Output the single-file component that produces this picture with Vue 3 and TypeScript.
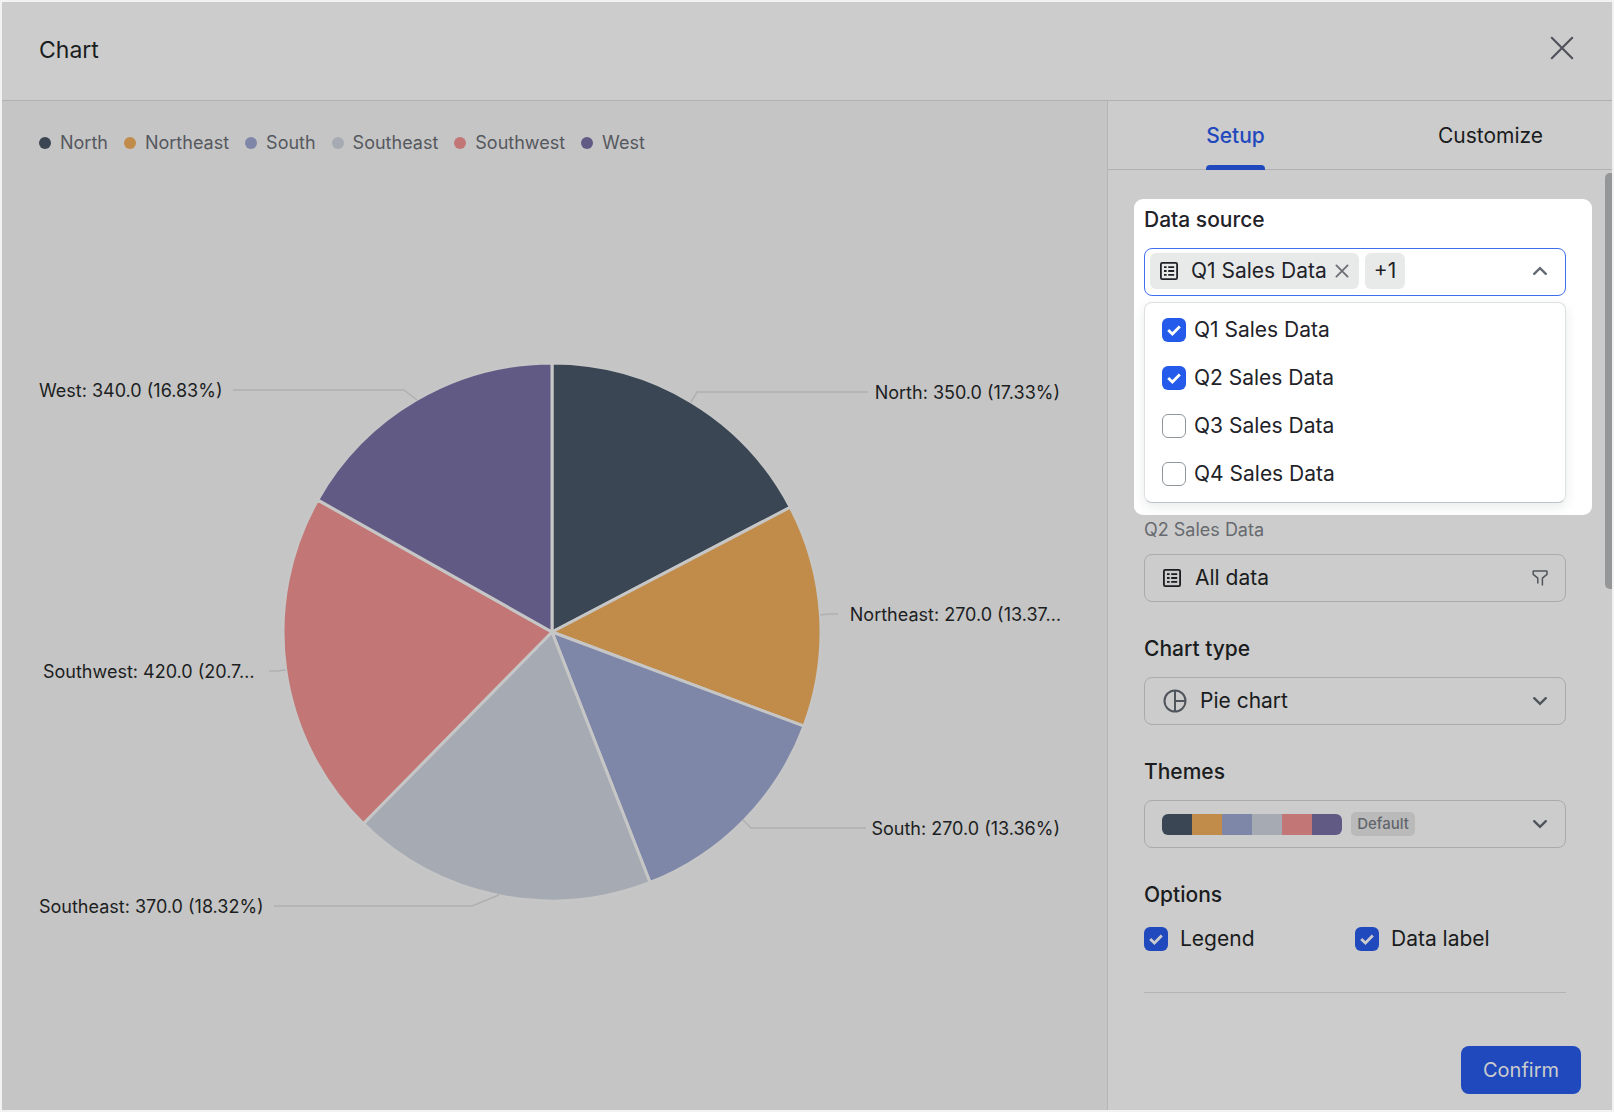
<script setup lang="ts">
import { computed, reactive, ref } from 'vue'

interface Region {
  name: string
  value: number
  color: string
  label: string
  x: number
  y: number
  anchor: 'start' | 'end'
  leader: string
}

const regions: Region[] = [
  { name: 'North', value: 350, color: '#3b4654', label: 'North: 350.0 (17.33%)', x: 1058, y: 212, anchor: 'end', leader: '689,222 695,212 866,212' },
  { name: 'Northeast', value: 270, color: '#c18b49', label: 'Northeast: 270.0 (13.37…', x: 1059, y: 434, anchor: 'end', leader: '818,435 826,434 836,434' },
  { name: 'South', value: 270, color: '#7f87a8', label: 'South: 270.0 (13.36%)', x: 1058, y: 648, anchor: 'end', leader: '741,640 749,648 864,648' },
  { name: 'Southeast', value: 370, color: '#a6abb3', label: 'Southeast: 370.0 (18.32%)', x: 37, y: 726, anchor: 'start', leader: '497,715 470,726 272,726' },
  { name: 'Southwest', value: 420, color: '#c27776', label: 'Southwest: 420.0 (20.7…', x: 41, y: 491, anchor: 'start', leader: '284,490 275,491 267,491' },
  { name: 'West', value: 340, color: '#615a85', label: 'West: 340.0 (16.83%)', x: 37, y: 210, anchor: 'start', leader: '415,220 402,210 231,210' },
]

const center = { x: 550, y: 452 }
const radius = 269

const slices = computed(() => {
  const total = regions.reduce((sum, r) => sum + r.value, 0)
  let angle = -Math.PI / 2
  return regions.map((r) => {
    const end = angle + (r.value / total) * Math.PI * 2
    const point = (a: number) =>
      `${(center.x + radius * Math.cos(a)).toFixed(2)} ${(center.y + radius * Math.sin(a)).toFixed(2)}`
    const d = `M${center.x} ${center.y} L${point(angle)} A${radius} ${radius} 0 0 1 ${point(end)} Z`
    angle = end
    return { color: r.color, d }
  })
})

const sources = reactive([
  { name: 'Q1 Sales Data', checked: true },
  { name: 'Q2 Sales Data', checked: true },
  { name: 'Q3 Sales Data', checked: false },
  { name: 'Q4 Sales Data', checked: false },
])

const options = reactive([
  { name: 'Legend', checked: true },
  { name: 'Data label', checked: true },
])

const chartType = ref('Pie chart')
const theme = ref('Default')
</script>

<template>
  <div class="frame">
    <div class="dialog">
      <header class="header">
        <h1 class="title">Chart</h1>
        <button class="icon-button" type="button" aria-label="Close">
          <svg width="24" height="24" viewBox="0 0 24 24" fill="none" stroke="#50535a" stroke-width="2.2" stroke-linecap="round">
            <path d="M1.8 1.8 22.2 22.2M22.2 1.8 1.8 22.2" />
          </svg>
        </button>
      </header>

      <div class="body">
        <main class="canvas">
          <ul class="legend">
            <li v-for="r in regions" :key="r.name" class="legend-item">
              <span class="dot" :style="{ background: r.color }"></span>{{ r.name }}
            </li>
          </ul>
          <svg class="pie" viewBox="0 0 1105 930" role="img" aria-label="Sales by region">
            <path v-for="s in slices" :key="s.color" class="slice" :d="s.d" :fill="s.color" />
            <polyline v-for="r in regions" :key="r.name" class="leader" :points="r.leader" />
            <text
              v-for="r in regions"
              :key="r.label"
              class="pie-label"
              :x="r.x"
              :y="r.y"
              :text-anchor="r.anchor"
              dominant-baseline="central"
            >{{ r.label }}</text>
          </svg>
        </main>

        <aside class="side">
          <nav class="tabs" role="tablist">
            <button class="tab active" type="button" role="tab" aria-selected="true"><span class="tab-text">Setup</span></button>
            <button class="tab" type="button" role="tab" aria-selected="false"><span class="tab-text">Customize</span></button>
          </nav>
          <div class="scrollbar"></div>

          <div class="settings">
            <section class="spotlight">
              <h2 id="source-heading" class="heading">Data source</h2>
              <div class="field focused" role="group" aria-labelledby="source-heading">
                <span class="tag">
                  <svg class="sheet" width="18" height="18" viewBox="0 0 18 18" fill="none" stroke="#1f2329" stroke-width="1.8">
                    <rect x=".9" y=".9" width="16.2" height="16.2" rx="1.4" />
                    <path d="M4 5.2h2.6M8.2 5.2h6M4 9h2.6M8.2 9h6M4 12.8h2.6M8.2 12.8h6" />
                  </svg>
                  Q1 Sales Data
                  <button class="icon-button" type="button" aria-label="Remove Q1 Sales Data">
                    <svg width="14" height="14" viewBox="0 0 14 14" fill="none" stroke="#6b6e73" stroke-width="1.8" stroke-linecap="round">
                      <path d="M1.4 1.4 12.6 12.6M12.6 1.4 1.4 12.6" />
                    </svg>
                  </button>
                </span>
                <span class="tag more">+1</span>
                <button class="icon-button push" type="button" aria-label="Close list">
                  <svg width="16" height="10" viewBox="0 0 16 10" fill="none" stroke="#646a73" stroke-width="2.4" stroke-linecap="round">
                    <path d="M2.2 7.8 8 2.2 13.8 7.8" />
                  </svg>
                </button>
              </div>
              <div class="menu">
                <label v-for="s in sources" :key="s.name" class="menu-row">
                  <span class="check">
                    <input v-model="s.checked" type="checkbox" />
                    <svg v-if="s.checked" width="24" height="24" viewBox="0 0 24 24" fill="none" stroke="#fff" stroke-width="2.8">
                      <path d="M6.2 11.9 10.4 16 17.8 8.4" />
                    </svg>
                  </span>
                  {{ s.name }}
                </label>
              </div>
            </section>

            <p class="sub-label">Q2 Sales Data</p>
            <button class="field range" type="button">
              <svg class="sheet" width="18" height="18" viewBox="0 0 18 18" fill="none" stroke="#1a1c20" stroke-width="1.8">
                <rect x=".9" y=".9" width="16.2" height="16.2" rx="1.4" />
                <path d="M4 5.2h2.6M8.2 5.2h6M4 9h2.6M8.2 9h6M4 12.8h2.6M8.2 12.8h6" />
              </svg>
              All data
              <svg class="push" width="16" height="16" viewBox="0 0 16 16" fill="none" stroke="#50555c" stroke-width="1.5" stroke-linejoin="round">
                <path d="M5.8 13.6V8.2L1.2 4.4V1.6Q1.2 1 1.8 1H14.4Q15 1 15 1.6V4.4L10.4 8.2V15.4" />
              </svg>
            </button>

            <label class="heading" for="chart-type">Chart type</label>
            <div class="field chart-type">
              <svg width="24" height="24" viewBox="0 0 24 24" fill="none" stroke="#50555c" stroke-width="2">
                <circle cx="12" cy="12" r="10.5" />
                <path d="M12 1.5V22.5M12 12H22.5" />
              </svg>
              <select id="chart-type" v-model="chartType" class="select">
                <option>Pie chart</option>
              </select>
              <svg class="chevron" width="16" height="10" viewBox="0 0 16 10" fill="none" stroke="#50555c" stroke-width="2.4" stroke-linecap="round">
                <path d="M2.2 2.2 8 7.8 13.8 2.2" />
              </svg>
            </div>

            <label class="heading" for="theme">Themes</label>
            <div class="field theme">
              <span class="palette">
                <span v-for="r in regions" :key="r.name" class="swatch" :style="{ background: r.color }"></span>
              </span>
              <select id="theme" v-model="theme" class="theme-select">
                <option>Default</option>
              </select>
              <svg class="chevron push" width="16" height="10" viewBox="0 0 16 10" fill="none" stroke="#50555c" stroke-width="2.4" stroke-linecap="round">
                <path d="M2.2 2.2 8 7.8 13.8 2.2" />
              </svg>
            </div>

            <h2 class="heading">Options</h2>
            <div class="options">
              <label v-for="o in options" :key="o.name" class="option">
                <span class="check dim">
                  <input v-model="o.checked" type="checkbox" />
                  <svg v-if="o.checked" width="24" height="24" viewBox="0 0 24 24" fill="none" stroke="#ccc" stroke-width="2.8">
                    <path d="M6.2 11.9 10.4 16 17.8 8.4" />
                  </svg>
                </span>
                {{ o.name }}
              </label>
            </div>
          </div>

          <footer class="footer">
            <button class="confirm" type="button">Confirm</button>
          </footer>
        </aside>
      </div>
    </div>
  </div>
</template>

<style>
body {
  margin: 0;
  background: #f2f2f2;
}
</style>

<style scoped>
.frame,
.frame * {
  box-sizing: border-box;
}

.frame {
  display: flex;
  min-height: 100vh;
  padding: 2px;
  font-family: Inter, Roboto, 'Liberation Sans', sans-serif;
  font-size: 21px;
  line-height: 28px;
  color: #1a1c20;
}

button,
select {
  margin: 0;
  padding: 0;
  border: 0;
  background: none;
  color: inherit;
  font: inherit;
  text-align: left;
}

select {
  appearance: none;
}

input {
  margin: 0;
}

svg {
  display: block;
  flex: none;
}

.dialog {
  display: flex;
  flex: 1;
  flex-direction: column;
  min-width: 0;
  background: #ccc;
}

.header {
  display: flex;
  align-items: center;
  justify-content: space-between;
  height: 99px;
  padding: 0 38px 6px 37px;
  border-bottom: 1px solid #b0b1b5;
}

.title {
  margin: 0;
  padding-top: 4px;
  font-size: 23px;
  font-weight: 400;
}

.icon-button {
  display: block;
}

.body {
  display: flex;
  flex: 1;
}

.canvas {
  flex: 1;
  min-width: 0;
  background: #c5c5c5;
}

.legend {
  display: flex;
  flex-wrap: wrap;
  gap: 16px;
  margin: 0;
  padding: 30px 37px 25px;
  list-style: none;
  color: #55585e;
  font-size: 18px;
  line-height: 24px;
}

.legend-item {
  display: flex;
  align-items: center;
  gap: 9px;
}

.dot {
  width: 12px;
  height: 12px;
  border-radius: 50%;
}

.pie {
  width: 100%;
  height: auto;
}

.slice {
  stroke: #c6c6c6;
  stroke-width: 3;
  stroke-linejoin: bevel;
}

.leader {
  fill: none;
  stroke: #b0b0b0;
  stroke-width: 1.5;
}

.pie-label {
  fill: #1c1e22;
  font-size: 18px;
}

.side {
  position: relative;
  display: flex;
  flex: 0 0 505px;
  flex-direction: column;
  min-width: 0;
  border-left: 1px solid #b4b5b6;
}

.tabs {
  display: flex;
  height: 69px;
  border-bottom: 1px solid #b0b1b5;
  overflow-x: clip;
}

.tab {
  display: flex;
  flex: 0 0 255px;
  justify-content: center;
}

.tab-text {
  display: flex;
  flex-direction: column;
  justify-content: space-between;
  height: 69px;
  padding-top: 21px;
}

.active {
  color: #1f49bd;
  font-weight: 500;
}

.active .tab-text::after {
  height: 5px;
  border-radius: 4px 4px 0 0;
  background: #1f49bd;
  content: '';
}

.scrollbar {
  position: absolute;
  top: 72px;
  right: 0;
  width: 7px;
  height: 416px;
  border-radius: 5px 0 0 5px;
  background: #959697;
}

.settings {
  display: flex;
  flex-direction: column;
  margin: 0 46px 0 36px;
  padding: 29px 0 37px;
  border-bottom: 1px solid #b3b4b5;
}

.spotlight {
  margin: 0 -26px 0 -10px;
  padding: 7px 26px 12px 10px;
  border-radius: 9px;
  background: #fff;
  color: #1f2329;
}

.heading {
  margin: 33px 0 14px;
  font-size: 21px;
  font-weight: 500;
  line-height: 28px;
}

.spotlight .heading {
  margin-top: 0;
}

.field {
  display: flex;
  align-items: center;
  gap: 14px;
  width: 100%;
  height: 48px;
  padding: 0 17px;
  border: 1px solid #a9aaab;
  border-radius: 8px;
}

.focused {
  gap: 6px;
  padding-left: 5px;
  padding-bottom: 2px;
  border-color: #3f6fec;
}

.push {
  margin-left: auto;
}

.tag {
  display: flex;
  align-items: center;
  gap: 8px;
  height: 36px;
  padding: 0 10px;
  border-radius: 6px;
  background: #e8eaea;
}

.tag .sheet {
  margin-right: 5px;
}

.more {
  padding: 0 9px;
}

.menu {
  margin-top: 6px;
  padding: 3px 17px 4px;
  border: 1px solid #dde0e3;
  border-bottom-color: #bcc2c7;
  border-radius: 8px;
  box-shadow: 0 4px 12px rgba(31, 45, 50, 0.1);
}

.menu-row,
.option {
  display: flex;
  align-items: center;
}

.menu-row {
  gap: 8px;
  height: 48px;
}

.check {
  display: grid;
  width: 24px;
  height: 24px;
}

.check > * {
  grid-area: 1 / 1;
}

.check svg {
  pointer-events: none;
}

.check input {
  width: 24px;
  height: 24px;
  border: 1px solid #8f959e;
  border-radius: 6px;
  appearance: none;
}

.check input:checked {
  border: 0;
  background: #245bea;
}

.dim input:checked {
  background: #1f49bd;
}

.sub-label {
  margin: 3px 0 12px;
  color: #676a6f;
  font-size: 18px;
  line-height: 24px;
}

.range {
  padding-left: 18px;
}

.chart-type {
  gap: 13px;
  padding-left: 18px;
}

.select {
  flex: 1;
  height: 46px;
}

.theme {
  gap: 9px;
}

.palette {
  display: flex;
  height: 21px;
  border-radius: 6px;
  overflow: hidden;
}

.swatch {
  width: 30px;
}

.theme-select {
  width: 64px;
  height: 24px;
  border-radius: 5px;
  background: #bababa;
  color: #63666c;
  font-size: 15px;
  font-weight: 500;
  line-height: 24px;
  text-align: center;
}

.options {
  display: grid;
  grid-template-columns: 1fr 1fr;
}

.option {
  gap: 12px;
  height: 32px;
}

.footer {
  display: flex;
  justify-content: flex-end;
  margin-top: auto;
  padding: 16px 31px;
}

.confirm {
  width: 120px;
  height: 48px;
  border-radius: 8px;
  background: #1f49bd;
  color: #ccc;
  font-size: 20px;
  text-align: center;
}
</style>
